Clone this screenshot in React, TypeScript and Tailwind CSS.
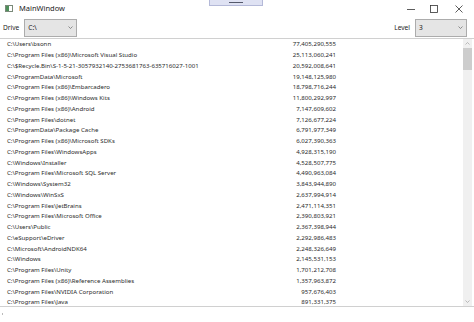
import React from "react";

const rows: [string, string][] = [
  ["C:\\Users\\bsonn", "77,405,290,555"],
  ["C:\\Program Files (x86)\\Microsoft Visual Studio", "25,113,060,241"],
  ["C:\\$Recycle.Bin\\S-1-5-21-3057932140-2753681763-635716027-1001", "20,592,008,641"],
  ["C:\\ProgramData\\Microsoft", "19,148,125,980"],
  ["C:\\Program Files (x86)\\Embarcadero", "18,798,716,244"],
  ["C:\\Program Files (x86)\\Windows Kits", "11,800,292,997"],
  ["C:\\Program Files (x86)\\Android", "7,147,609,602"],
  ["C:\\Program Files\\dotnet", "7,126,677,224"],
  ["C:\\ProgramData\\Package Cache", "6,791,977,349"],
  ["C:\\Program Files (x86)\\Microsoft SDKs", "6,027,390,363"],
  ["C:\\Program Files\\WindowsApps", "4,928,315,190"],
  ["C:\\Windows\\Installer", "4,528,507,775"],
  ["C:\\Program Files\\Microsoft SQL Server", "4,490,963,084"],
  ["C:\\Windows\\System32", "3,843,944,890"],
  ["C:\\Windows\\WinSxS", "2,637,994,914"],
  ["C:\\Program Files\\JetBrains", "2,471,114,351"],
  ["C:\\Program Files\\Microsoft Office", "2,390,803,921"],
  ["C:\\Users\\Public", "2,367,398,944"],
  ["C:\\eSupport\\eDriver", "2,292,986,483"],
  ["C:\\Microsoft\\AndroidNDK64", "2,248,326,649"],
  ["C:\\Windows", "2,145,531,153"],
  ["C:\\Program Files\\Unity", "1,701,212,708"],
  ["C:\\Program Files (x86)\\Reference Assemblies", "1,357,963,872"],
  ["C:\\Program Files\\NVIDIA Corporation", "957,676,403"],
  ["C:\\Program Files\\Java", "891,331,375"],
];

function Combo({ value, width }: { value: string; width: string }) {
  return (
    <div className={`${width} flex h-[18px] items-center justify-between border border-[#acacac] bg-[#e5e5e5] pl-[3px] pr-[3px]`}>
      <span className="text-[6.6px] text-[#222]">{value}</span>
      <svg width="5" height="3" viewBox="0 0 5 3">
        <path d="M0.5 0.5 L2.5 2.5 L4.5 0.5" fill="none" stroke="#666" strokeWidth="0.7" />
      </svg>
    </div>
  );
}

export default function App() {
  return (
    <div className="relative h-[322px] w-[474px] overflow-hidden bg-white font-['Segoe_UI','Noto_Sans',sans-serif] text-[#222]">
      {/* collapsed debug toolbar */}
      <div className="absolute left-[209px] top-0 flex h-[6px] w-[54px] items-center justify-center border border-t-0 border-[#b4b9d8] bg-[#dfe2f3]">
        <div className="h-[1.5px] w-[14px] bg-[#55596b]" />
      </div>

      {/* title bar */}
      <div className="flex h-[17px] items-center justify-between">
        <div className="flex items-center gap-[6px] pl-[5px]">
          <div className="flex h-[7px] w-[8px] items-center border border-[#7a8a7a] bg-white">
            <div className="h-full w-[3px] bg-[#4e8f5a]" />
          </div>
          <span className="text-[7.5px]">MainWindow</span>
        </div>
        <div className="flex items-center pr-[1px]">
          <div className="flex w-[23px] justify-center">
            <svg width="8" height="8" viewBox="0 0 8 8">
              <path d="M0 4.5 H8" stroke="#333" strokeWidth="0.8" />
            </svg>
          </div>
          <div className="flex w-[23px] justify-center">
            <svg width="8" height="8" viewBox="0 0 8 8">
              <rect x="0.5" y="0.5" width="7" height="7" fill="none" stroke="#333" strokeWidth="0.8" />
            </svg>
          </div>
          <div className="flex w-[28px] justify-center">
            <svg width="8" height="8" viewBox="0 0 8 8">
              <path d="M0.5 0.5 L7.5 7.5 M7.5 0.5 L0.5 7.5" stroke="#333" strokeWidth="0.8" />
            </svg>
          </div>
        </div>
      </div>

      {/* toolbar */}
      <div className="flex h-[21px] items-center justify-between pl-[3px] pr-[7px]">
        <div className="flex items-center gap-[5px]">
          <span className="text-[6.6px]">Drive</span>
          <Combo value="C:\" width="w-[53px]" />
        </div>
        <div className="flex items-center gap-[5px]">
          <span className="text-[6.6px]">Level</span>
          <Combo value="3" width="w-[52px]" />
        </div>
      </div>

      {/* list */}
      <div className="flex h-[269px] border-y border-[#d0d0d0]">
        <div className="flex-1 overflow-hidden">
          {rows.map(([path, size]) => (
            <div key={path} className="flex h-[10.75px] items-center text-[6.1px] leading-none text-[#2a2a2a]">
              <span className="w-[267px] whitespace-nowrap pl-[7px]">{path}</span>
              <span className="w-[69px] text-right">{size}</span>
            </div>
          ))}
        </div>
        <div className="mr-[2px] flex w-[9px] flex-col bg-[#f0f0f0]">
          <div className="flex h-[9px] items-center justify-center">
            <svg width="5" height="3" viewBox="0 0 5 3">
              <path d="M0.5 2.5 L2.5 0.5 L4.5 2.5" fill="none" stroke="#a0a0a0" strokeWidth="0.7" />
            </svg>
          </div>
          <div className="h-[22px] bg-[#cdcdcd]" />
          <div className="flex-1" />
          <div className="flex h-[9px] items-center justify-center">
            <svg width="5" height="3" viewBox="0 0 5 3">
              <path d="M0.5 0.5 L2.5 2.5 L4.5 0.5" fill="none" stroke="#a0a0a0" strokeWidth="0.7" />
            </svg>
          </div>
        </div>
      </div>

      <div className="pl-[2px] pt-[6px]">
        <div className="h-[2px] w-[1px] bg-[#bbbbbb]" />
      </div>
    </div>
  );
}
